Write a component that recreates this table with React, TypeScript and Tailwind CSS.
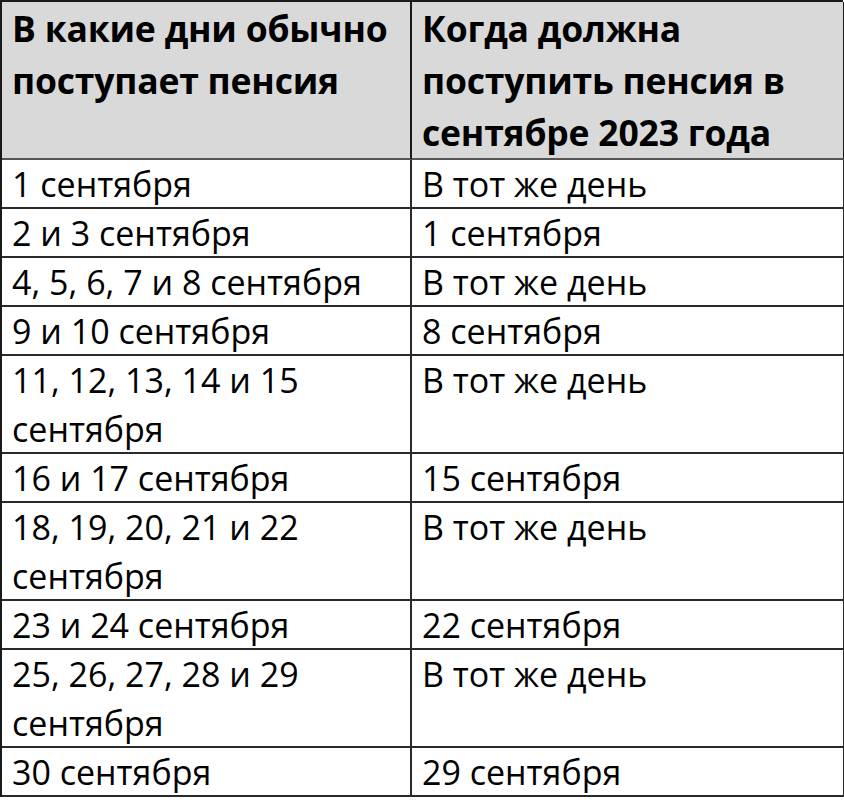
import React from "react";

const rows: { left: string[]; right: string; tall?: boolean }[] = [
  { left: ["1 сентября"], right: "В тот же день" },
  { left: ["2 и 3 сентября"], right: "1 сентября" },
  { left: ["4, 5, 6, 7 и 8 сентября"], right: "В тот же день" },
  { left: ["9 и 10 сентября"], right: "8 сентября" },
  { left: ["11, 12, 13, 14 и 15", "сентября"], right: "В тот же день", tall: true },
  { left: ["16 и 17 сентября"], right: "15 сентября" },
  { left: ["18, 19, 20, 21 и 22", "сентября"], right: "В тот же день", tall: true },
  { left: ["23 и 24 сентября"], right: "22 сентября" },
  { left: ["25, 26, 27, 28 и 29", "сентября"], right: "В тот же день", tall: true },
  { left: ["30 сентября"], right: "29 сентября" },
];

export default function App() {
  return (
    <div className="w-[844px] h-[800px] bg-white overflow-hidden">
      <div
        className="w-[843px] grid grid-cols-[410px_433px] border-l-2 border-t-2 border-[#1a1a1a] text-black"
        style={{ fontFamily: '"Open Sans", "Noto Sans", sans-serif' }}
      >
        <div className="h-[158px] bg-[#d9d9d9] border-r-2 border-b-2 border-r-[#1a1a1a] border-b-[#555] pl-[10px] text-[35.5px] leading-[52px] font-bold whitespace-nowrap tracking-[-0.2px]">
          В какие дни обычно
          <br />
          поступает пенсия
        </div>
        <div className="h-[158px] bg-[#d9d9d9] border-r-2 border-b-2 border-r-[#1a1a1a] border-b-[#555] pl-[10px] text-[35.5px] leading-[52px] font-bold whitespace-nowrap tracking-[-0.2px]">
          Когда должна
          <br />
          поступить пенсия в
          <br />
          сентябре 2023 года
        </div>
        {rows.map((r, i) => (
          <React.Fragment key={i}>
            <div
              className={`${r.tall ? "h-[98px]" : "h-[49px]"} border-r-2 border-b-2 border-[#2a2a2a] pl-[10px] text-[34px] leading-[49px] whitespace-nowrap`}
            >
              {r.left.map((l, j) => (
                <div key={j}>{l}</div>
              ))}
            </div>
            <div
              className={`${r.tall ? "h-[98px]" : "h-[49px]"} border-r-2 border-b-2 border-[#2a2a2a] pl-[10px] text-[34px] leading-[49px] whitespace-nowrap`}
            >
              {r.right}
            </div>
          </React.Fragment>
        ))}
      </div>
    </div>
  );
}
